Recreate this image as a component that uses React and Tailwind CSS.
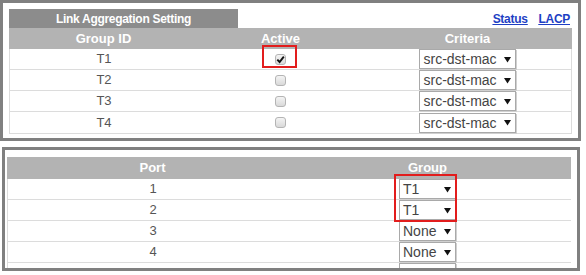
import React from 'react';

const font = { fontFamily: '"Liberation Sans", Arial, sans-serif' };

const Arrow = () => (
  <svg width="7" height="7" viewBox="0 0 7 7" className="shrink-0">
    <path d="M0 1 L7 1 L3.5 6.5 Z" fill="#111" />
  </svg>
);

const Select = ({ value, className }) => (
  <div
    className={`flex items-center justify-between h-[20px] bg-white border border-[#a9a9a9] shadow-[1px_1px_0_#d0d0d0] text-[14px] text-[#444] leading-none ${className}`}
  >
    <span>{value}</span>
    <Arrow />
  </div>
);

const Checkbox = ({ checked }) => (
  <span className="flex items-center justify-center w-[11px] h-[11px] rounded-[3px] border border-[#b4b4b4] bg-gradient-to-b from-[#f4f4f4] to-[#d9d9d9]">
    {checked && (
      <svg width="9" height="9" viewBox="0 0 9 9">
        <path d="M1.3 4.6 L3.6 7 L7.8 1.6" stroke="#111" strokeWidth="1.9" fill="none" />
      </svg>
    )}
  </span>
);

const groups = ['T1', 'T2', 'T3', 'T4'];
const ports = [
  { port: '1', group: 'T1' },
  { port: '2', group: 'T1' },
  { port: '3', group: 'None' },
  { port: '4', group: 'None' },
  { port: '5', group: 'None' },
];

export default function App() {
  return (
    <div className="relative w-[586px] h-[275px] bg-white overflow-hidden" style={font}>
      {/* Link Aggregation Setting */}
      <div className="w-[581px] h-[141px] border-[3px] border-[#808080] px-[6px] pt-[6px]">
        <div className="flex justify-between items-end h-[19px]">
          <div className="w-[229px] h-[19px] bg-[#8c8c8c] text-white text-[12px] font-bold tracking-tight flex items-center justify-center">
            Link Aggregation Setting
          </div>
          <div className="flex gap-[11px] pr-[2px] pb-[3px] text-[12px] font-bold tracking-tight text-[#1e3fc4] underline leading-none">
            <a href="#">Status</a>
            <a href="#">LACP</a>
          </div>
        </div>
        <div className="border-x border-b border-[#dcdcdc]">
          <div className="grid grid-cols-[189px_165px_1fr] h-[21px] bg-[#b3b3b3] text-white text-[13px] font-bold items-center text-center -mx-px">
            <div>Group ID</div>
            <div>Active</div>
            <div>Criteria</div>
          </div>
          {groups.map((g, i) => (
            <div
              key={g}
              className={`grid grid-cols-[188px_165px_1fr] h-[21px] items-center text-center text-[13px] text-[#555] ${i < 3 ? 'border-b border-[#dcdcdc]' : ''}`}
            >
              <div>{g}</div>
              <div className="flex justify-center">
                <Checkbox checked={i === 0} />
              </div>
              <div className="flex justify-center">
                <Select value="src-dst-mac" className="w-[97px] pl-[4px] pr-[4px]" />
              </div>
            </div>
          ))}
        </div>
      </div>

      {/* Port membership */}
      <div className="ml-[2px] mt-[6px] w-[578px] h-[124px] border-[3px] border-[#808080] pl-[2px] pr-[6px] pt-[7px] overflow-hidden">
        <div className="grid grid-cols-[291px_259px_1fr] h-[22px] bg-[#b3b3b3] text-white text-[13px] font-bold items-center text-center">
          <div>Port</div>
          <div>Group</div>
          <div />
        </div>
        <div className="border-l border-[#dcdcdc]">
          {ports.map((p) => (
            <div
              key={p.port}
              className="grid grid-cols-[290px_259px_1fr] h-[21px] items-center text-center text-[13px] text-[#555] border-b border-[#dcdcdc]"
            >
              <div>{p.port}</div>
              <div className="flex justify-center">
                <Select value={p.group} className="w-[57px] pl-[3px] pr-[4px]" />
              </div>
              <div />
            </div>
          ))}
        </div>
      </div>

      {/* highlight boxes */}
      <div className="absolute left-[262px] top-[45px] w-[35px] h-[23px] border-2 border-[#e21d1d]" />
      <div className="absolute left-[394px] top-[174px] w-[63px] h-[48px] border-2 border-[#e21d1d]" />
    </div>
  );
}
